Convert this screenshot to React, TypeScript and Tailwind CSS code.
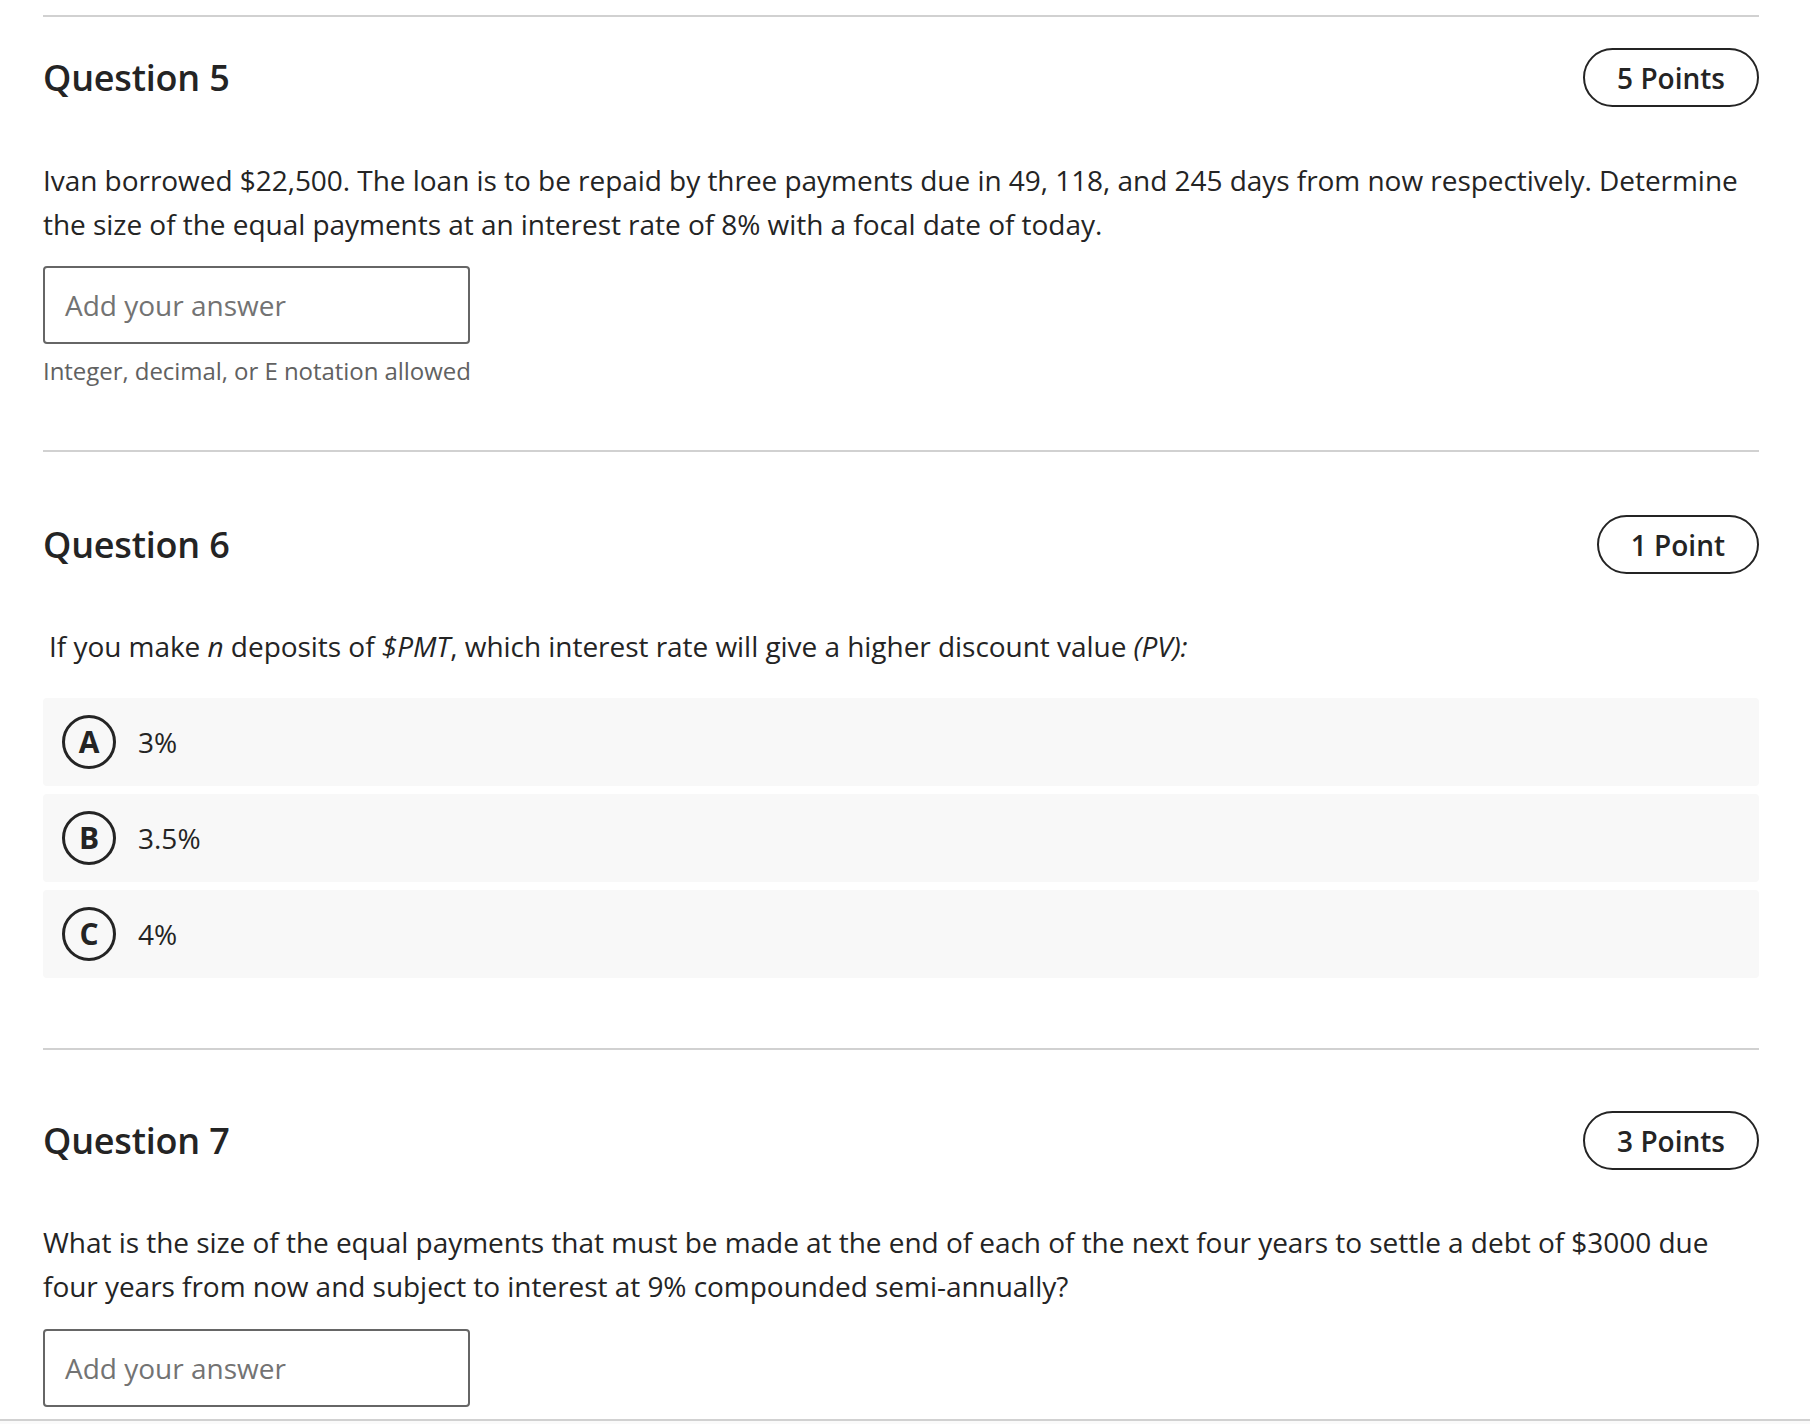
import React from 'react';

interface Option {
    letter: string;
    text: string;
}

function PointsPill({ label }: { label: string }) {
    return (
        <div className="h-[59px] px-[32px] flex items-center rounded-full border-2 border-[#242424] text-[28px] font-semibold leading-none">
            {label}
        </div>
    );
}

function QuestionHeader({ title, points }: { title: string; points: string }) {
    return (
        <div className="flex items-center justify-between h-[59px]">
            <h2 className="text-[36px] font-semibold leading-[48px] tracking-[-0.2px]">{title}</h2>
            <PointsPill label={points} />
        </div>
    );
}

function AnswerInput() {
    return (
        <div className="w-[427px] h-[78px] border-2 border-[#666666] rounded-[4px] flex items-center pl-[20px] text-[28px] text-[#737373]">
            Add your answer
        </div>
    );
}

function Divider() {
    return <div className="h-[2px] bg-[#d1d1d1]" />;
}

const options: Option[] = [
    { letter: 'A', text: '3%' },
    { letter: 'B', text: '3.5%' },
    { letter: 'C', text: '4%' },
];

export default function App() {
    return (
        <div className="w-[1810px] h-[1424px] overflow-hidden bg-white text-[#242424] font-['Open_Sans',sans-serif] flex flex-col">
            <div className="pl-[43px] pr-[51px] pt-[15px]">
                <Divider />

                {/* Question 5 */}
                <div className="pt-[31px] pb-[63px]">
                    <QuestionHeader title="Question 5" points="5 Points" />
                    <p className="mt-[51px] text-[28px] leading-[44px] tracking-[-0.04px]">
                        Ivan borrowed $22,500. The loan is to be repaid by three payments due in 49, 118, and 245 days from now respectively. Determine the size of the equal payments at an interest rate of 8% with a focal date of today.
                    </p>
                    <div className="mt-[20px]">
                        <AnswerInput />
                    </div>
                    <div className="mt-[11px] text-[24px] leading-[32px] text-[#616161] tracking-[-0.05px]">
                        Integer, decimal, or E notation allowed
                    </div>
                </div>
                <Divider />

                {/* Question 6 */}
                <div className="pt-[63px] pb-[70px]">
                    <QuestionHeader title="Question 6" points="1 Point" />
                    <p className="mt-[50px] pl-[6px] text-[28px] leading-[44px] tracking-[-0.04px]">
                        If you make <i>n</i> deposits of <i>$PMT</i>, which interest rate will give a higher discount value <i>(PV):</i>
                    </p>
                    <div className="mt-[30px] flex flex-col gap-[8px]">
                        {options.map((opt) => (
                            <div key={opt.letter} className="h-[88px] bg-[#f8f8f8] rounded-[4px] flex items-center pl-[19px] gap-[22px]">
                                <div className="w-[54px] h-[54px] rounded-full border-[3px] border-[#242424] flex items-center justify-center text-[30px] font-bold leading-none">
                                    {opt.letter}
                                </div>
                                <span className="text-[28px] leading-none">{opt.text}</span>
                            </div>
                        ))}
                    </div>
                </div>
                <Divider />

                {/* Question 7 */}
                <div className="pt-[61px]">
                    <QuestionHeader title="Question 7" points="3 Points" />
                    <p className="mt-[50px] text-[28px] leading-[44px] tracking-[-0.04px]">
                        What is the size of the equal payments that must be made at the end of each of the next four years to settle a debt of $3000 due four years from now and subject to interest at 9% compounded semi-annually?
                    </p>
                    <div className="mt-[21px]">
                        <AnswerInput />
                    </div>
                </div>
            </div>
            <div className="mt-[12px] h-[2px] bg-[#d1d1d1]" />
            <div className="flex-1 bg-[#fafafa]" />
        </div>
    );
}
